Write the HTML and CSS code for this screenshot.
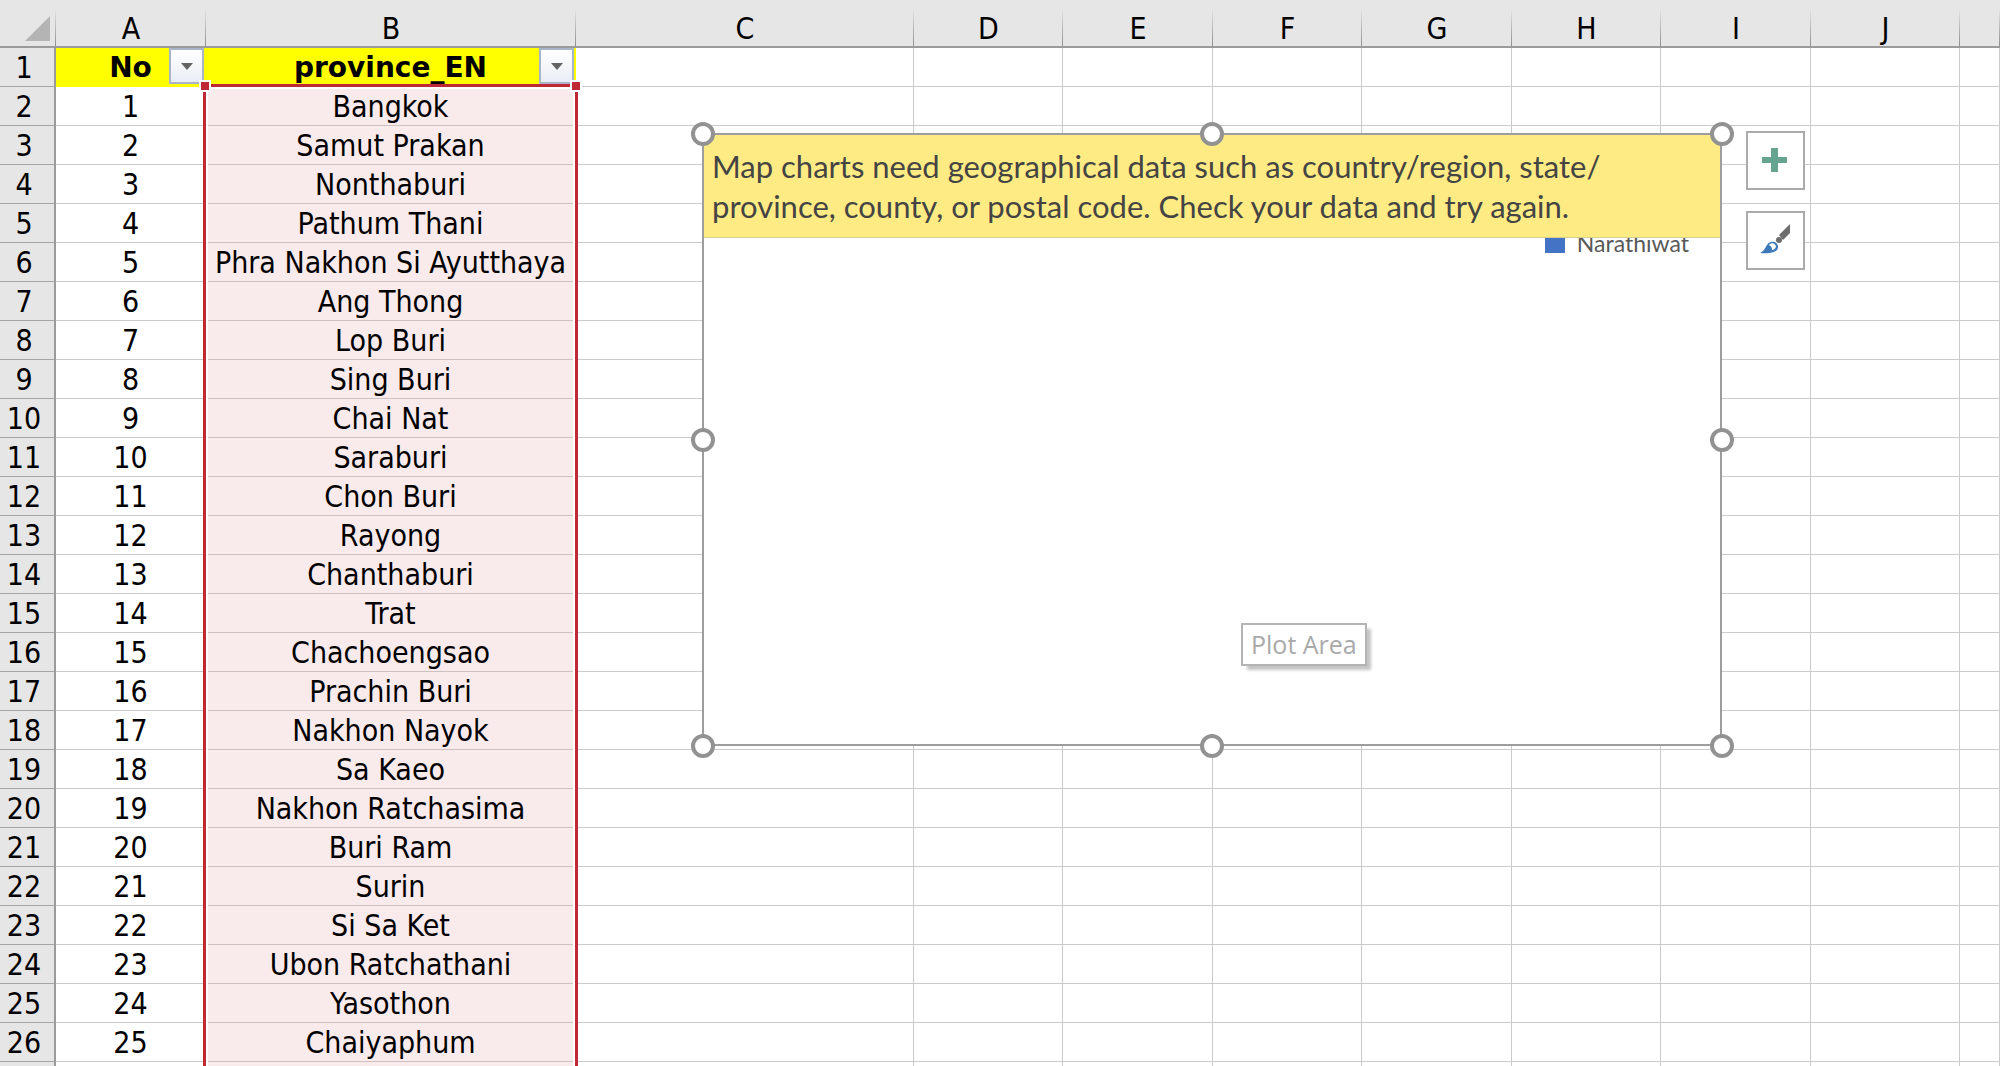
FILE: index.html
```html
<!DOCTYPE html>
<html lang="en">
<head>
    <meta charset="UTF-8">
    <title>Provinces</title>
    <link rel="stylesheet" href="styles.css">
</head>
<body>
    <main class="sheet">
        <!-- Spreadsheet grid -->
        <table class="grid">
            <colgroup>
                <col class="col-head">
                <col class="col-a">
                <col class="col-b">
                <col class="col-c">
                <col class="col-std"><col class="col-wide">
                <col class="col-std"><col class="col-wide">
                <col class="col-std"><col class="col-wide">
                <col class="col-std">
                <col>
            </colgroup>
            <thead>
                <tr>
                    <th class="corner"><svg class="corner-icon" viewBox="0 0 25 25"><path d="M25 0v25H0z"/></svg></th>
                    <th>A</th><th>B</th><th>C</th><th>D</th><th>E</th><th>F</th>
                    <th>G</th><th>H</th><th>I</th><th>J</th><th></th>
                </tr>
            </thead>
            <tbody id="rows">
                <tr class="title-row">
                    <th>1</th>
                    <td>No
                        <button class="filter" aria-label="Filter No"><svg viewBox="0 0 12 7"><path d="M0 0h12L6 7z"/></svg></button>
                    </td>
                    <td>province_EN
                        <button class="filter" aria-label="Filter province_EN"><svg viewBox="0 0 12 7"><path d="M0 0h12L6 7z"/></svg></button>
                    </td>
                    <td></td><td></td><td></td><td></td><td></td><td></td><td></td><td></td><td></td>
                </tr>
            </tbody>
        </table>

        <!-- Outline of the selected data range -->
        <div class="range">
            <span class="range-dot dot-left"></span>
            <span class="range-dot dot-right"></span>
        </div>

        <!-- Map chart -->
        <section class="chart">
            <p class="warning">Map charts need geographical data such as country/region, state/<br>province, county, or postal code. Check your data and try again.</p>
            <div class="legend"><span class="legend-key"></span>Narathiwat</div>
            <div class="tooltip">Plot Area</div>
            <span class="handle top left"></span>
            <span class="handle top center"></span>
            <span class="handle top right"></span>
            <span class="handle middle left"></span>
            <span class="handle middle right"></span>
            <span class="handle bottom left"></span>
            <span class="handle bottom center"></span>
            <span class="handle bottom right"></span>
        </section>

        <!-- Chart side buttons -->
        <div class="chart-tools">
            <button class="tool" aria-label="Chart Elements">
                <svg viewBox="0 0 59 59"><path fill="#66a390" d="M25 17h7v9h9v6h-9v9h-7v-9h-9v-6h9z"/></svg>
            </button>
            <button class="tool" aria-label="Chart Styles">
                <svg viewBox="0 0 59 59">
                    <path fill="#6d6d6d" d="M44 13v9l-7 7-4-5z"/>
                    <circle fill="#6d6d6d" cx="33" cy="29" r="3"/>
                    <path fill="#3f7ab8" d="M14 42c4-2 5-5 7-8 3-5 10-4 11 1 1 6-7 8-18 7z"/>
                    <path fill="#fff" d="M23 34c2-3 6-2 7 1 0 2-2 4-4 4 0-2 0-3-3-5z"/>
                </svg>
            </button>
        </div>
    </main>

    <script>
        const provinces = [
            "Bangkok", "Samut Prakan", "Nonthaburi", "Pathum Thani",
            "Phra Nakhon Si Ayutthaya", "Ang Thong", "Lop Buri", "Sing Buri",
            "Chai Nat", "Saraburi", "Chon Buri", "Rayong", "Chanthaburi",
            "Trat", "Chachoengsao", "Prachin Buri", "Nakhon Nayok", "Sa Kaeo",
            "Nakhon Ratchasima", "Buri Ram", "Surin", "Si Sa Ket",
            "Ubon Ratchathani", "Yasothon", "Chaiyaphum"
        ];
        const rows = document.getElementById('rows');

        function addRow(head, no, name) {
            const tr = document.createElement('tr');
            tr.innerHTML = `<th>${head}</th><td>${no}</td><td class="picked">${name}</td>` + '<td></td>'.repeat(9);
            rows.appendChild(tr);
        }

        provinces.forEach((name, i) => addRow(i + 2, i + 1, name));
        addRow('', '', '');
    </script>
</body>
</html>
```
FILE: styles.css
```css
* {
    box-sizing: border-box;
}

body {
    margin: 0;
    background: #fff;
    color: #000;
    font-family: "DejaVu Sans Condensed", "DejaVu Sans", sans-serif;
    font-size: 30px;
}

.sheet {
    position: relative;
    height: 100vh;
    overflow: hidden;
}

/* Grid */
.grid {
    width: 100%;
    table-layout: fixed;
    border-collapse: separate;
    border-spacing: 0;
    text-align: center;
    line-height: 34px;
}

.col-head { width: 56px; }
.col-a { width: 150px; }
.col-b { width: 370px; }
.col-c { width: 338px; }
.col-wide { width: 150px; }
.col-std { width: 149px; }

.grid th,
.grid td {
    position: relative;
    height: 39px;
    padding: 2px 0 0;
    white-space: nowrap;
}

.grid td {
    border-right: 1px solid #cacaca;
    border-bottom: 1px solid #cacaca;
}

.grid td:nth-child(2) {
    border-right-color: transparent;
}

.grid th {
    background: #e6e6e6;
    font-weight: normal;
}

.grid tbody th {
    padding-right: 6px;
    border-right: 2px solid #9b9b9b;
    border-bottom: 1px solid #a4a4a4;
}

.grid thead th {
    height: 48px;
    padding-top: 11px;
    border-bottom: 2px solid #9b9b9b;
    background: linear-gradient(#e6e6e6, #8e8e8e) right bottom / 1px 38px no-repeat #e6e6e6;
}

.grid .corner {
    padding: 16px 6px 5px 25px;
}

.corner-icon {
    display: block;
    width: 25px;
    height: 25px;
    fill: #b4b4b4;
}

.grid .title-row td {
    font-family: "DejaVu Sans", sans-serif;
    font-size: 28px;
    font-weight: bold;
}

.title-row td:nth-child(2),
.title-row td:nth-child(3) {
    background: #ff0;
    border-color: #ff0;
}

.grid .picked {
    background: #f9eaeb;
    border-right-color: #f9eaeb;
    border-bottom-color: #cdc0c1;
}

.filter {
    position: absolute;
    right: 1px;
    top: 0;
    display: flex;
    align-items: center;
    justify-content: center;
    width: 35px;
    height: 36px;
    padding: 0;
    border: 2px solid #a9b4c8;
    background: linear-gradient(#fff, #e9edf4);
}

.filter svg {
    width: 12px;
    height: 7px;
    fill: #636363;
}

/* Selected range */
.range {
    position: absolute;
    left: 203px;
    top: 84px;
    bottom: -10px;
    width: 375px;
    border: 3px solid #be2935;
    box-shadow: inset 0 0 0 2px #fff;
    pointer-events: none;
}

.range-dot {
    position: absolute;
    top: -7px;
    width: 12px;
    height: 12px;
    border: 2px solid #fff;
    background: #be2935;
}

.dot-left { left: -7px; }
.dot-right { right: -7px; }

/* Chart */
.chart {
    position: absolute;
    left: 702px;
    top: 133px;
    width: 1020px;
    height: 613px;
    border: 2px solid #9d9d9d;
    background: #fff;
}

.warning {
    position: relative;
    z-index: 1;
    height: 103px;
    margin: 0;
    padding: 11px 8px;
    border-bottom: 1px solid #d6d08c;
    background: #ffeb84;
    color: #444;
    font-family: Lato, sans-serif;
    font-size: 31px;
    line-height: 40px;
    white-space: nowrap;
}

.legend {
    position: absolute;
    right: 31px;
    top: 94px;
    display: flex;
    align-items: center;
    gap: 12px;
    color: #595959;
    font-family: Lato, sans-serif;
    font-size: 23px;
    line-height: 28px;
}

.legend-key {
    width: 20px;
    height: 20px;
    background: #4472c4;
}

.tooltip {
    position: absolute;
    left: 537px;
    top: 488px;
    padding: 0 8px;
    border: 2px solid #b4b4b4;
    background: #fff;
    box-shadow: 5px 5px 3px -1px #c4c4c4;
    color: #a9a9a9;
    font-family: "Open Sans", sans-serif;
    font-size: 25px;
    line-height: 39px;
}

.handle {
    position: absolute;
    z-index: 2;
    width: 24px;
    height: 24px;
    border: 4px solid #929292;
    border-radius: 50%;
    background: #fff;
}

.handle.top { top: -13px; }
.handle.middle { top: calc(50% - 12px); }
.handle.bottom { bottom: -14px; }
.handle.left { left: -13px; }
.handle.center { left: calc(50% - 12px); }
.handle.right { right: -14px; }

.chart-tools {
    position: absolute;
    left: 1746px;
    top: 131px;
    display: flex;
    flex-direction: column;
    gap: 21px;
}

.tool {
    width: 59px;
    height: 59px;
    padding: 0;
    border: 2px solid #ababab;
    background: #fff;
}

.tool svg {
    display: block;
    width: 59px;
    height: 59px;
    margin: -2px;
}
```
